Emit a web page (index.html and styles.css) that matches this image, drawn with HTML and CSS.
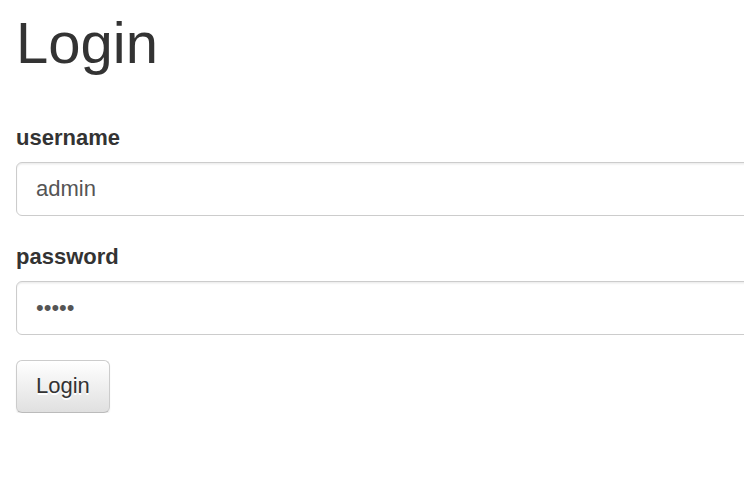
FILE: index.html
```html
<!DOCTYPE html>
<html lang="en">
<head>
<meta charset="utf-8">
<title>Login</title>
<link rel="stylesheet" href="styles.css">
</head>
<body>
<div class="page">
  <h1 class="title">Login</h1>
  <form class="login-form">
    <div class="form-group">
      <label class="field-label" for="username">username</label>
      <input class="field-input" id="username" type="text" value="admin">
    </div>
    <div class="form-group">
      <label class="field-label" for="password">password</label>
      <input class="field-input" id="password" type="password" value="admin">
    </div>
    <button class="btn" type="button">Login</button>
  </form>
</div>
</body>
</html>
```
FILE: styles.css
```css
html, body {
  margin: 0;
  padding: 0;
  overflow: hidden;
  background: #fff;
}
body {
  font-family: "Liberation Sans", Arial, sans-serif;
  color: #333;
}
.page {
  padding: 0 0 0 16px;
}
.title {
  margin: 11px 0 47px;
  font-size: 58px;
  font-weight: 400;
  line-height: 1.1;
  color: #333;
}
.form-group {
  margin-bottom: 25px;
}
.field-label {
  display: block;
  font-size: 22px;
  font-weight: 700;
  line-height: 31px;
  margin-bottom: 9px;
  color: #333;
}
.field-input {
  display: block;
  box-sizing: border-box;
  width: 100vw;
  height: 54px;
  padding: 0 19px;
  font-family: "Liberation Sans", Arial, sans-serif;
  font-size: 22px;
  color: #555;
  background: #fff;
  border: 1.5px solid #ccc;
  border-radius: 6px;
  box-shadow: inset 0 1.5px 1.5px rgba(0, 0, 0, 0.075);
  outline: none;
}
.btn {
  display: block;
  box-sizing: border-box;
  height: 53px;
  padding: 0 19px;
  font-family: "Liberation Sans", Arial, sans-serif;
  font-size: 22px;
  color: #333;
  text-shadow: 0 1.5px 0 #fff;
  background: linear-gradient(to bottom, #fff 0%, #e0e0e0 100%);
  border: 1.5px solid #ccc;
  border-color: #ccc #ccc #bbb;
  border-radius: 6px;
  box-shadow: inset 0 1.5px 0 rgba(255, 255, 255, 0.15), 0 1.5px 1.5px rgba(0, 0, 0, 0.075);
}
```
